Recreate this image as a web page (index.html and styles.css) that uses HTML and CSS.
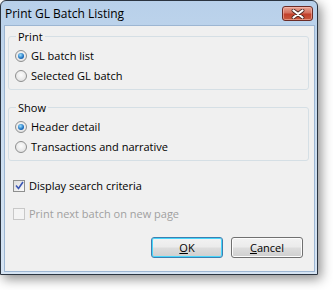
FILE: index.html
```html
<!DOCTYPE html>
<html lang="en">
<head>
    <meta charset="UTF-8">
    <title>Print GL Batch Listing</title>
    <link rel="stylesheet" href="styles.css">
</head>
<body>
    <div class="window">
        <div class="title-bar">
            <span class="title">Print GL Batch Listing</span>
            <div class="close-btn">
                <svg width="14" height="10" viewBox="0 0 14 10">
                    <path d="M2.5 1.5 L11.5 8.5 M11.5 1.5 L2.5 8.5" stroke="#4a2520" stroke-width="3.8" stroke-linecap="round"/>
                    <path d="M2.5 1.5 L11.5 8.5 M11.5 1.5 L2.5 8.5" stroke="#fff" stroke-width="2.2" stroke-linecap="round"/>
                </svg>
            </div>
        </div>
        <div class="client">
            <fieldset class="group">
                <legend>Print</legend>
                <label class="option"><span class="radio checked"></span>GL batch list</label>
                <label class="option"><span class="radio"></span>Selected GL batch</label>
            </fieldset>
            <fieldset class="group">
                <legend>Show</legend>
                <label class="option"><span class="radio checked"></span>Header detail</label>
                <label class="option"><span class="radio"></span>Transactions and narrative</label>
            </fieldset>
            <label class="check-row"><span class="checkbox checked">
                <svg width="9" height="9" viewBox="0 0 9 9"><path d="M1 4.5 L3.5 7.5 L8 1" fill="none" stroke="#3a56b4" stroke-width="1.6"/></svg>
            </span>Display search criteria</label>
            <label class="check-row disabled"><span class="checkbox"></span>Print next batch on new page</label>
            <div class="buttons">
                <button class="btn default"><u>O</u>K</button>
                <button class="btn"><u>C</u>ancel</button>
            </div>
        </div>
    </div>
</body>
</html>
```

FILE: styles.css
```css
* {
    margin: 0;
    padding: 0;
    box-sizing: border-box;
}

body {
    font-family: 'Open Sans', 'Noto Sans', sans-serif;
    font-size: 11px;
    line-height: 15px;
    color: #000;
    background-color: #fff;
    width: 333px;
    height: 290px;
}

.window {
    width: 318px;
    height: 275px;
    background: linear-gradient(#b8d0ea, #c9dcef 40%, #d6e4f3);
    border: 1px solid #2b3440;
    border-radius: 6px 6px 0 0;
    box-shadow: 3px 4px 12px rgba(0, 0, 0, 0.45);
    padding: 0 2px 2px 3px;
    display: flex;
    flex-direction: column;
}

.title-bar {
    height: 24px;
    display: flex;
    align-items: center;
    justify-content: space-between;
    padding: 1px 2px 0 1px;
}

.title {
    font-size: 12px;
    color: #000;
}

.close-btn {
    width: 31px;
    height: 15px;
    border: 1px solid #6b2c26;
    border-radius: 3px;
    background: linear-gradient(#e8a493, #d3705e 45%, #c2402c 55%, #c75a3e);
    box-shadow: inset 0 0 0 1px rgba(255, 200, 190, 0.5);
    display: flex;
    align-items: center;
    justify-content: center;
}

.client {
    flex: 1;
    background-color: #f0f0f0;
    border: 1px solid #9db6d2;
    padding: 3px 5px 0 3px;
    display: flex;
    flex-direction: column;
}

.group {
    border: 1px solid #d5dfe5;
    border-radius: 3px;
    padding: 3px 8px 5px 6px;
    margin-bottom: 10px;
    display: flex;
    flex-direction: column;
    gap: 3px;
}

.group legend {
    padding: 0 2px;
    margin-left: 1px;
    color: #000;
}

.option,
.check-row {
    display: flex;
    align-items: center;
    height: 17px;
    gap: 4px;
}

.radio {
    width: 12px;
    height: 12px;
    border-radius: 50%;
    border: 1px solid #8e8f8f;
    background: radial-gradient(circle at 50% 40%, #fcfcfc, #dcdcdc);
    display: flex;
    align-items: center;
    justify-content: center;
}

.radio.checked::after {
    content: '';
    width: 6px;
    height: 6px;
    border-radius: 50%;
    background: radial-gradient(circle at 40% 35%, #9fe3ff, #1c6fbf 60%, #0e4a8c);
}

.check-row {
    margin: 6px 0 0 5px;
}

.check-row + .check-row {
    margin-top: 11px;
}

.checkbox {
    width: 12px;
    height: 12px;
    border: 1px solid #8e8f8f;
    background: linear-gradient(135deg, #dcdcdc, #fbfbfb);
    display: flex;
    align-items: center;
    justify-content: center;
}

.disabled {
    color: #a0a0a0;
}

.disabled .checkbox {
    border-color: #c8c8c8;
    background: #f4f4f4;
}

.buttons {
    display: flex;
    justify-content: flex-end;
    gap: 8px;
    margin-top: auto;
    padding: 0 6px 13px 0;
}

.btn {
    width: 72px;
    height: 21px;
    font-family: inherit;
    font-size: 11px;
    color: #000;
    border: 1px solid #707070;
    border-radius: 3px;
    background: linear-gradient(#f2f2f2 0%, #ebebeb 48%, #dddddd 52%, #cfcfcf 100%);
    box-shadow: inset 0 0 0 1px #fcfcfc;
}

.btn.default {
    border-color: #3c7fb1;
    box-shadow: inset 0 0 0 1px #48d6fb;
}

.btn u {
    text-decoration: underline;
}
```
